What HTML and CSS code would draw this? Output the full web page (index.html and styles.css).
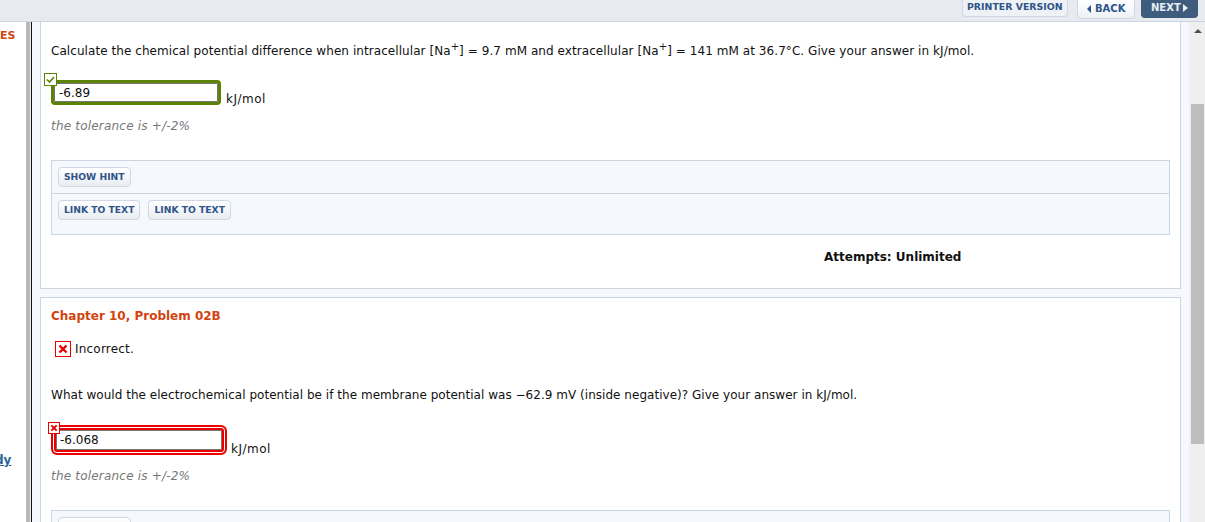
FILE: index.html
```html
<!DOCTYPE html>
<html lang="en">
<head>
  <meta charset="UTF-8">
  <title>Chapter 10 Problems</title>
  <link rel="stylesheet" href="styles.css">
</head>
<body>
  <div class="topbar">
    <a class="btn printer">PRINTER VERSION</a>
    <a class="btn back"><span class="arrow-left"></span>BACK</a>
    <a class="btn next">NEXT<span class="arrow-right"></span></a>
  </div>

  <div class="main">
    <!-- Left nav, cut off by the window -->
    <div class="sidebar">
      <div class="nav-heading">ES</div>
      <a class="nav-link">dy</a>
    </div>
    <div class="divider"></div>

    <div class="content">
      <div class="card first">
        <p class="question q1">Calculate the chemical potential difference when intracellular [Na<sup>+</sup>] = 9.7 mM and extracellular [Na<sup>+</sup>] = 141 mM at 36.7°C. Give your answer in kJ/mol.</p>
        <div class="answer-row correct-row">
          <span class="mark mark-ok">
            <svg width="11" height="11" viewBox="0 0 11 11"><path d="M2 5.5 L4.5 8 L9 3" fill="none" stroke="#5b8200" stroke-width="1.6"/></svg>
          </span>
          <input class="answer correct" type="text" value="-6.89">
          <span class="unit">kJ/mol</span>
        </div>
        <p class="tolerance">the tolerance is +/-2%</p>
        <div class="tools">
          <div class="tools-row"><a class="tool-btn">SHOW HINT</a></div>
          <div class="tools-row links"><a class="tool-btn">LINK TO TEXT</a><a class="tool-btn">LINK TO TEXT</a></div>
        </div>
        <div class="attempts">Attempts: Unlimited</div>
      </div>

      <div class="card second">
        <h2 class="problem-title">Chapter 10, Problem 02B</h2>
        <div class="result">
          <span class="x-box">
            <svg width="10" height="10" viewBox="0 0 10 10"><path d="M1.5 1.5 L8.5 8.5 M8.5 1.5 L1.5 8.5" stroke="#ea0000" stroke-width="2.4"/></svg>
          </span>
          Incorrect.
        </div>
        <p class="question q2">What would the electrochemical potential be if the membrane potential was −62.9 mV (inside negative)? Give your answer in kJ/mol.</p>
        <div class="answer-row wrong-row">
          <span class="mark mark-bad">
            <svg width="8" height="8" viewBox="0 0 9 9"><path d="M1.5 1.5 L7.5 7.5 M7.5 1.5 L1.5 7.5" stroke="#ea0000" stroke-width="2.2"/></svg>
          </span>
          <input class="answer wrong" type="text" value="-6.068">
          <span class="unit">kJ/mol</span>
        </div>
        <p class="tolerance">the tolerance is +/-2%</p>
        <div class="tools">
          <div class="tools-row"><a class="tool-btn">SHOW HINT</a></div>
        </div>
      </div>
    </div>

    <div class="scrollbar">
      <span class="scroll-up"></span>
      <div class="scroll-thumb"></div>
    </div>
  </div>
</body>
</html>
```

FILE: styles.css
```css
html, body {
  margin: 0;
  padding: 0;
  height: 522px;
  overflow: hidden;
}

body {
  font-family: "DejaVu Sans", Verdana, sans-serif;
  font-size: 12px;
  color: #111;
  background: #fff;
}

/* Top bar */
.topbar {
  height: 21px;
  background: #e7ebef;
  border-bottom: 1px solid #cdd5e2;
  display: flex;
  justify-content: flex-end;
  align-items: flex-start;
  gap: 6px;
  padding-right: 7px;
}

.btn {
  box-sizing: border-box;
  height: 18px;
  font-size: 10px;
  font-weight: bold;
  color: #2f5488;
  background: linear-gradient(#fff, #eef1f5);
  border: 1px solid #cfd8e3;
  border-top: none;
  border-radius: 0 0 4px 4px;
  display: flex;
  align-items: flex-start;
}

.printer {
  width: 106px;
  height: 17px;
  font-size: 9.4px;
  line-height: 13px;
  padding-left: 4px;
  margin-right: 3px;
  background: #eef1f5;
}

.back {
  width: 58px;
  height: 19px;
  line-height: 17px;
  padding-left: 9px;
}

.next {
  width: 57px;
  line-height: 16px;
  padding-left: 9px;
  background: #3e5d7c;
  border-color: #3e5d7c;
  color: #e6edf5;
}

.arrow-left, .arrow-right {
  width: 0;
  height: 0;
  margin-top: 5px;
  border-top: 4px solid transparent;
  border-bottom: 4px solid transparent;
}

.arrow-left {
  border-right: 4px solid #2f5488;
  margin-right: 4px;
}

.arrow-right {
  border-left: 5px solid #e6edf5;
  margin-top: 4px;
  margin-left: 2px;
}

/* Page body */
.main {
  display: flex;
  height: 500px;
}

.sidebar {
  width: 26px;
  flex: none;
  display: flex;
  flex-direction: column;
  overflow: hidden;
}

.nav-heading {
  margin-top: 7px;
  font-weight: bold;
  font-size: 11px;
  color: #d2440f;
  line-height: 14px;
}

.nav-link {
  margin-top: 410px;
  margin-left: -5px;
  font-weight: bold;
  color: #2a6496;
  text-decoration: underline;
  line-height: 14px;
}

.divider {
  width: 6px;
  flex: none;
  background: linear-gradient(to right, #b8b8b8 4px, #ececec 4px, #ececec 5px, #111 5px);
}

.content {
  width: 1157px;
  flex: none;
  box-sizing: border-box;
  background: #f5f8fc;
  padding: 0 8px;
  overflow: hidden;
}

.card {
  box-sizing: border-box;
  background: #fff;
  border: 1px solid #cdd5e2;
  padding: 0 10px;
}

.first {
  height: 267px;
  border-top: none;
}

.second {
  margin-top: 8px;
  height: 240px;
}

.question {
  margin: 0;
  line-height: 14px;
  padding-top: 22px;
}

.q1 {
  letter-spacing: 0.065px;
}

.q2 {
  padding-top: 31px;
  letter-spacing: 0.03px;
}

.question sup {
  font-size: 10px;
  line-height: 0;
}

.answer-row {
  position: relative;
  display: flex;
  align-items: flex-start;
}

.correct-row {
  margin-top: 22px;
}

.wrong-row {
  margin-top: 23px;
}

.answer {
  box-sizing: border-box;
  font-family: "DejaVu Sans", Verdana, sans-serif;
  font-size: 12px;
  color: #111;
  background: #fff;
  outline: none;
  padding: 0 5px;
}

.correct {
  width: 170px;
  height: 25px;
  border: 3px solid #5b8200;
  border-radius: 4px;
  box-shadow: inset 0 0 0 1px #777;
}

.wrong {
  width: 176px;
  height: 30px;
  border: 2px solid #ea0000;
  border-radius: 6px;
  box-shadow: inset 0 0 0 1px #fff, inset 0 0 0 3px #ea0000, inset 0 0 0 4px #777;
  padding-left: 7px;
}

.unit {
  margin-left: 5px;
  margin-top: 12px;
  line-height: 14px;
  letter-spacing: 0.5px;
}

.wrong-row .unit {
  margin-left: 4px;
  margin-top: 17px;
}

.mark {
  position: absolute;
  box-sizing: border-box;
  background: #fff;
  display: flex;
  align-items: center;
  justify-content: center;
}

.mark-ok {
  width: 13px;
  height: 13px;
  left: -7px;
  top: -7px;
  border: 1px solid #5b8200;
}

.mark-bad {
  width: 12px;
  height: 12px;
  left: -3px;
  top: -3px;
  border: 1px solid #ea0000;
}

.tolerance {
  margin: 13px 0 0;
  font-style: italic;
  color: #777;
  line-height: 14px;
  letter-spacing: 0.2px;
}

.tools {
  margin-top: 27px;
  border: 1px solid #cdd5e2;
  background: #f5f8fc;
}

.tools-row {
  padding: 6px;
  display: flex;
  gap: 8px;
  height: 20px;
}

.tools-row.links {
  border-top: 1px solid #cdd5e2;
  height: 28px;
}

.tool-btn {
  box-sizing: border-box;
  height: 20px;
  font-size: 9.2px;
  font-weight: bold;
  line-height: 18px;
  color: #2f5488;
  padding: 0 5px;
  border: 1px solid #cfd8e3;
  border-radius: 4px;
  background: linear-gradient(#fff, #e9edf2);
}

.attempts {
  margin-top: 14px;
  margin-left: 773px;
  font-weight: bold;
  font-size: 12px;
  line-height: 16px;
}

.problem-title {
  margin: 0;
  padding-top: 10px;
  font-size: 12px;
  line-height: 16px;
  color: #d2440f;
}

.result {
  margin-top: 17px;
  margin-left: 4px;
  display: flex;
  align-items: center;
  gap: 4px;
  line-height: 16px;
  letter-spacing: 0.2px;
}

.x-box {
  box-sizing: border-box;
  width: 16px;
  height: 16px;
  border: 1.5px solid #ea0000;
  display: flex;
  align-items: center;
  justify-content: center;
}

/* Scrollbar */
.scrollbar {
  flex: 1;
  background: #efefef;
  position: relative;
}

.scroll-up {
  position: absolute;
  left: 5px;
  top: 7px;
  width: 0;
  height: 0;
  border-left: 4px solid transparent;
  border-right: 4px solid transparent;
  border-bottom: 4px solid #505050;
}

.scroll-thumb {
  position: absolute;
  left: 2px;
  right: 1px;
  top: 82px;
  height: 340px;
  background: #bdbdbd;
}
```
